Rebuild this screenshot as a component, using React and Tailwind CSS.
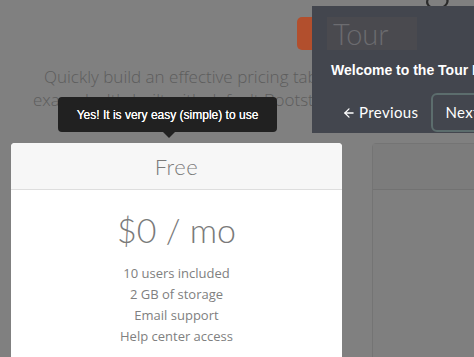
import { ArrowLeft } from 'lucide-react'

const FEATURES = ['10 users included', '2 GB of storage', 'Email support', 'Help center access']

function Tooltip() {
  return (
    <div className="absolute left-[58px] top-[97px] z-20">
      <div className="w-[219px] h-[35px] rounded-[4px] bg-[#212121] flex items-center justify-center text-white text-[12px] font-['Liberation_Sans',Arial,sans-serif] [text-shadow:0_0_0.5px_#fff]">
        Yes! It is very easy (simple) to use
      </div>
      <div className="ml-[105px] w-0 h-0 border-x-[6px] border-x-transparent border-t-[6px] border-t-[#212121]" />
    </div>
  )
}

function TourPopover() {
  return (
    <div className="absolute left-[312px] top-[6px] w-[200px] h-[127px] bg-[#43464e] z-20">
      <div className="ml-[15px] mt-[11px] w-[90px] h-[33px] bg-[#4a4a4f] flex items-center pl-[6px]">
        <span className="text-[29px] leading-none text-[#6c6c70] font-['Lato',sans-serif] font-light">Tour</span>
      </div>
      <p className="mt-[10px] ml-[19px] whitespace-nowrap text-white text-[14px] font-bold font-['Liberation_Sans',Arial,sans-serif]">
        Welcome to the Tour Plugin
      </p>
      <div className="mt-[12px] flex items-center">
        <div className="ml-[30px] flex items-center gap-[3px] text-white text-[15px] font-['Lato',sans-serif] tracking-wide">
          <ArrowLeft size={14} strokeWidth={2.2} />
          <span>Previous</span>
        </div>
        <div className="ml-[13px] h-[39px] w-[70px] rounded-[6px] border-2 border-[#5c6d6d] flex items-center pl-[12px] text-white text-[15px] font-['Lato',sans-serif] tracking-wide">
          Next
        </div>
      </div>
    </div>
  )
}

function FreeCard() {
  return (
    <div className="w-[331px] shrink-0 bg-white rounded-t-[4px] overflow-hidden">
      <div className="h-[47px] bg-[#f7f7f7] border-b border-[#dedede] flex items-center justify-center">
        <span className="text-[22px] text-[#7a7a7a] font-['Lato',sans-serif] font-light tracking-wide">Free</span>
      </div>
      <div className="pt-[19px] flex flex-col items-center">
        <div className="text-[34px] leading-[42px] text-[#7a7a7a] font-['Lato',sans-serif] font-light">$0 / mo</div>
        <ul className="mt-[12px] text-center text-[13px] leading-[21px] text-[#808080] font-['Open_Sans',sans-serif]">
          {FEATURES.map(f => <li key={f}>{f}</li>)}
        </ul>
        <div className="h-[40px]" />
      </div>
    </div>
  )
}

function DimCard() {
  return (
    <div className="w-[331px] shrink-0 h-[260px] rounded-t-[4px] border border-[#747474] bg-[#7f7f7f]">
      <div className="h-[46px] bg-[#7c7c7c] border-b border-[#727272]" />
    </div>
  )
}

export default function App() {
  return (
    <div className="relative w-[474px] h-[357px] overflow-hidden bg-[#808080]">
      {/* heading, mostly off screen */}
      <div className="h-[6px] overflow-hidden flex flex-col justify-end">
        <h1 className="pl-[300px] whitespace-nowrap text-[52px] leading-[52px] text-[#2a2a2a] font-['Lato',sans-serif] font-light">Pricing</h1>
      </div>

      <div className="pl-[297px] pt-[11px]">
        <div className="w-[60px] h-[33px] rounded-[5px] bg-[#b24f2d]" />
      </div>

      {/* lead text */}
      <div className="mt-[15px] text-[17px] leading-[23px] text-[#5d5d5d] font-['Open_Sans',sans-serif] font-light whitespace-nowrap">
        <p className="pl-[44px]">Quickly build an effective pricing table for your potential customers with this Bootstrap</p>
        <p className="pl-[33px]">example. It's built with default Bootstrap components and utilities with little customization.</p>
      </div>

      <div className="mt-[32px] px-[11px] flex gap-[30px]">
        <FreeCard />
        <DimCard />
      </div>

      <Tooltip />
      <TourPopover />
    </div>
  )
}
